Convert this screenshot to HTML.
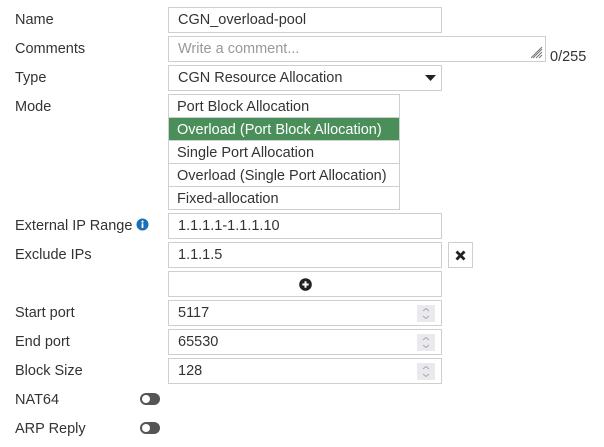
<!DOCTYPE html>
<html><head><style>
body{margin:0;width:604px;height:447px;background:#fff;font-family:"Liberation Sans",sans-serif;font-size:14.5px;color:#333;position:relative;overflow:hidden}
.l{position:absolute;left:15px}
.b{position:absolute;box-sizing:border-box;border:1px solid #cfcfcf;background:#fff;padding-left:9px;line-height:25px;white-space:nowrap}
.sp{position:absolute;left:248px;top:4px;width:18px;height:17px;background:#e9e9ee}
.sp svg{display:block}
.tg{position:absolute;left:140px;width:20px;height:12px;border-radius:6px;background:#555}
.tg:after{content:"";position:absolute;left:2px;top:2px;width:8px;height:8px;border-radius:50%;background:#fff}
.it{height:23px;box-sizing:border-box;border-bottom:1px solid #cfcfcf;padding-left:8px;line-height:24px}
</style></head><body>
<div class="l" style="top:12px">Name</div>
<div class="l" style="top:41px">Comments</div>
<div class="l" style="top:70px">Type</div>
<div class="l" style="top:99px">Mode</div>
<div class="l" style="top:218px">External IP Range <svg width="13" height="13" style="vertical-align:-1px" viewBox="0 0 13 13"><circle cx="6.5" cy="6.5" r="6" fill="#1a6fb5"/><rect x="5.6" y="5.3" width="1.8" height="4.7" fill="#fff"/><circle cx="6.5" cy="3.6" r="1.1" fill="#fff"/></svg></div>
<div class="l" style="top:247px">Exclude IPs</div>
<div class="l" style="top:305px">Start port</div>
<div class="l" style="top:334px">End port</div>
<div class="l" style="top:363px">Block Size</div>
<div class="l" style="top:392px">NAT64</div>
<div class="l" style="top:421px">ARP Reply</div>

<div class="b" style="left:168px;top:7px;width:274px;height:26px">CGN_overload-pool</div>
<div class="b" style="left:168px;top:36px;width:378px;height:26px;color:#999">Write a comment...
<svg style="position:absolute;right:2px;bottom:2px" width="12" height="12" viewBox="0 0 12 12"><path d="M11 2L2 11M11 5L5 11M11 8L8 11M11 0L0 11" stroke="#777" stroke-width="1"/></svg></div>
<div style="position:absolute;left:550px;top:49px">0/255</div>
<div class="b" style="left:168px;top:65px;width:274px;height:26px">CGN Resource Allocation
<svg style="position:absolute;left:256px;top:9px" width="11" height="6"><path d="M0 0H11L5.5 6Z" fill="#222"/></svg></div>
<div style="position:absolute;left:168px;top:94px;width:232px;height:116px;box-sizing:border-box;border:1px solid #cfcfcf;border-bottom:none">
<div class="it">Port Block Allocation</div>
<div class="it" style="background:#4a8f59;color:#fff">Overload (Port Block Allocation)</div>
<div class="it">Single Port Allocation</div>
<div class="it">Overload (Single Port Allocation)</div>
<div class="it">Fixed-allocation</div>
</div>
<div class="b" style="left:168px;top:213px;width:274px;height:26px">1.1.1.1-1.1.1.10</div>
<div class="b" style="left:168px;top:242px;width:274px;height:26px">1.1.1.5</div>
<div class="b" style="left:448px;top:242px;width:25px;height:26px;padding:0"><svg style="position:absolute;left:6px;top:7px" width="11" height="11"><path d="M1.5 1.5L9.5 9.5M9.5 1.5L1.5 9.5" stroke="#222" stroke-width="2.8"/></svg></div>
<div class="b" style="left:168px;top:271px;width:274px;height:26px"><svg style="position:absolute;left:130px;top:6px" width="13" height="13"><circle cx="6.5" cy="6.5" r="6.3" fill="#222"/><path d="M6.5 3.3V9.7M3.3 6.5H9.7" stroke="#fff" stroke-width="2"/></svg></div>
<div class="b" style="left:168px;top:300px;width:274px;height:26px">5117<div class="sp"><svg width="18" height="17"><path d="M6 6L9 3.5L12 6M6 11L9 13.5L12 11" stroke="#aaa" fill="none"/></svg></div></div>
<div class="b" style="left:168px;top:329px;width:274px;height:26px">65530<div class="sp"><svg width="18" height="17"><path d="M6 6L9 3.5L12 6M6 11L9 13.5L12 11" stroke="#aaa" fill="none"/></svg></div></div>
<div class="b" style="left:168px;top:358px;width:274px;height:26px">128<div class="sp"><svg width="18" height="17"><path d="M6 6L9 3.5L12 6M6 11L9 13.5L12 11" stroke="#aaa" fill="none"/></svg></div></div>
<div class="tg" style="top:393px"></div>
<div class="tg" style="top:422px"></div>
</body></html>
